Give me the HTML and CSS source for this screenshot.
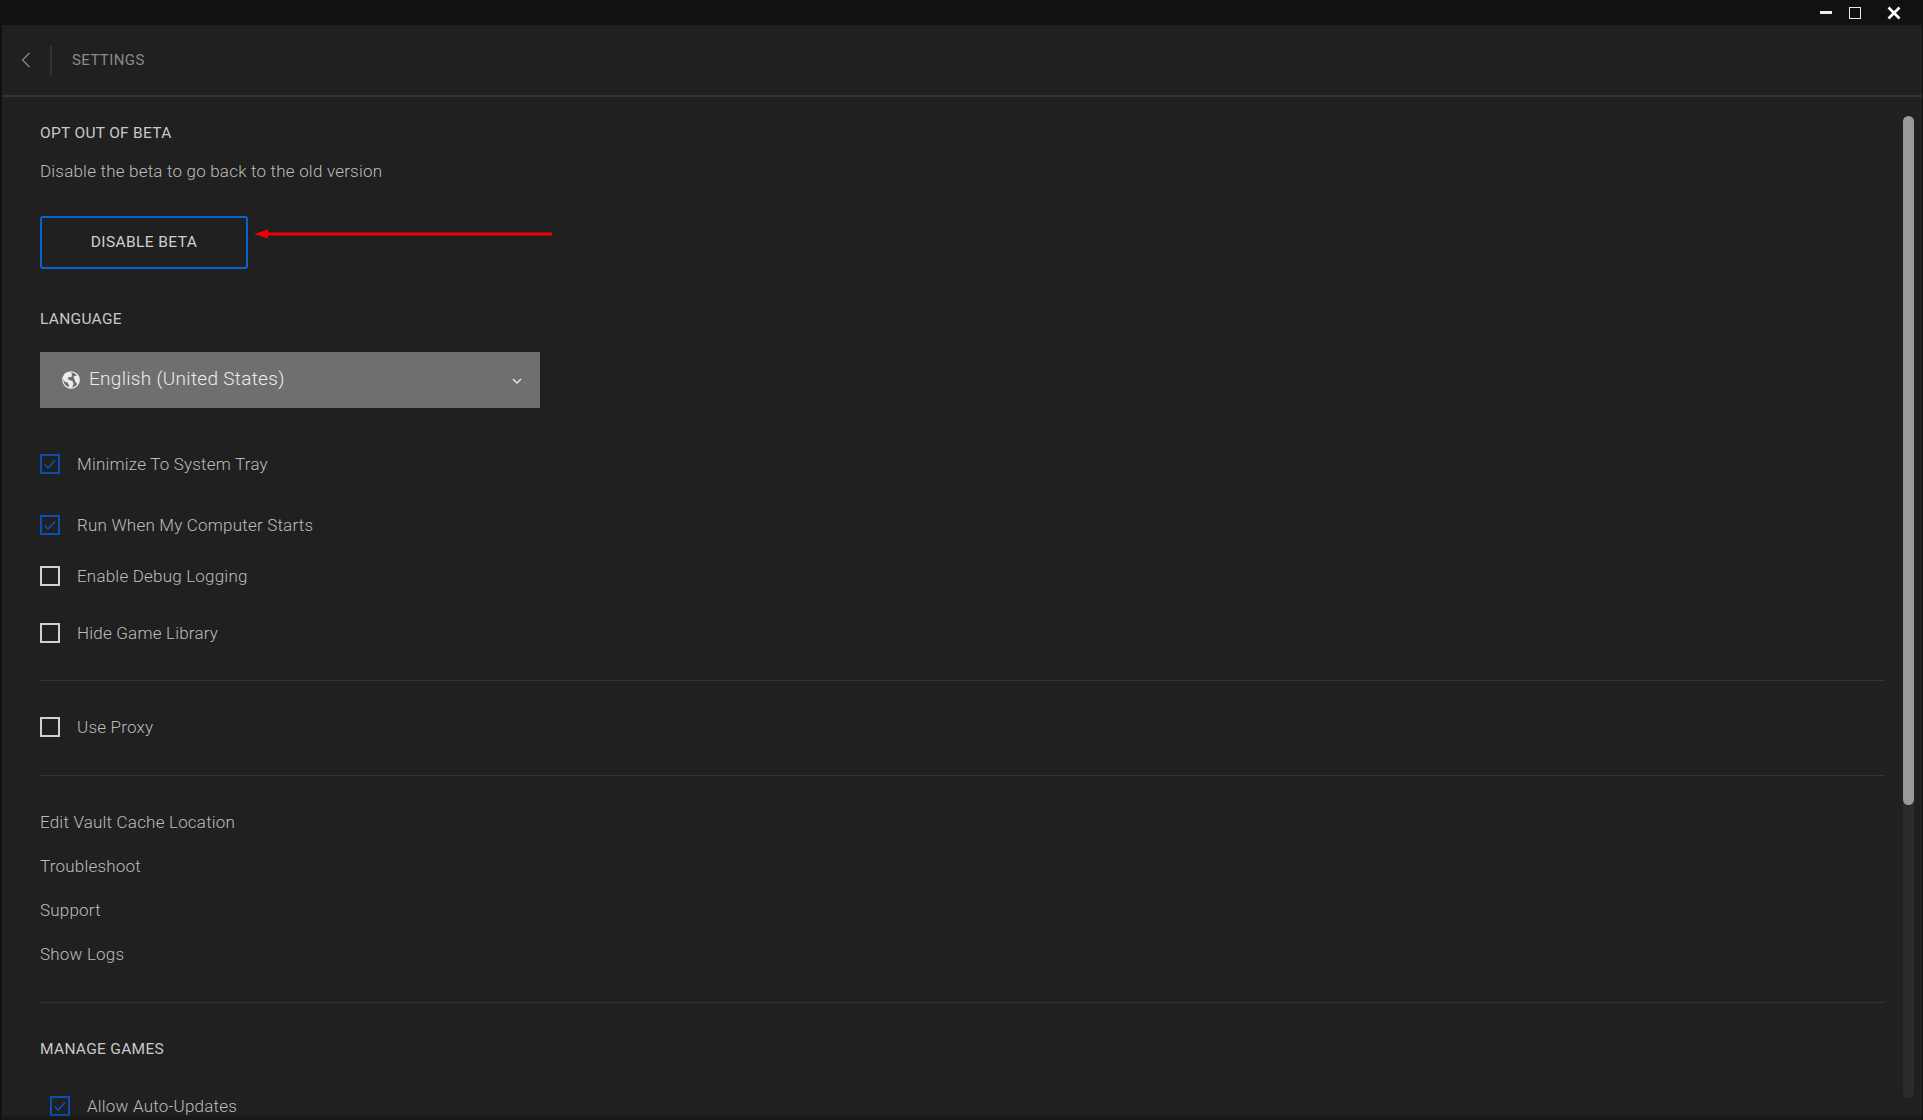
FILE: index.html
```html
<!DOCTYPE html>
<html>
<head>
    <title>Settings</title>
    <link rel="stylesheet" href="styles.css">
</head>
<body>
    <div class="titlebar">
        <span class="win-min"></span>
        <span class="win-max"></span>
        <svg class="win-close" width="14" height="14" viewBox="0 0 14 14"><path d="M1.5 1.5l11 11M12.5 1.5l-11 11" stroke="#fff" stroke-width="2.6" fill="none"/></svg>
    </div>

    <div class="app">
        <div class="header">
            <svg class="back" width="10" height="16" viewBox="0 0 10 16"><path d="M8.5 1L1.5 8l7 7" stroke="#8a8a8a" stroke-width="1.2" fill="none"/></svg>
            <span class="header-sep"></span>
            <span class="header-title">SETTINGS</span>
        </div>

        <div class="content">
            <h2 class="heading">OPT OUT OF BETA</h2>
            <p class="desc">Disable the beta to go back to the old version</p>

            <div class="beta-row">
                <button class="btn-outline">DISABLE BETA</button>
                <svg class="arrow" width="298" height="10" viewBox="0 0 298 10"><path d="M0 5l14-4.500v3h284v3H14v3z" fill="#f00000"/></svg>
            </div>

            <h2 class="heading heading-lang">LANGUAGE</h2>
            <div class="select">
                <svg class="globe" width="18" height="18" viewBox="0 0 18 18">
                    <circle cx="9" cy="9" r="8.200" fill="none" stroke="#ececec" stroke-width="1.200"/>
                    <path d="M8 .8L3 2 .8 7l1.700 3.500 3 1 1.500 2.500-.5 3 3.500-.3 1.500-4-1-2.500-3.500-1.500L5.500 7.500 7 6h2.500L10 3z" fill="#ececec"/>
                    <path d="M11.500 5.500l4.500-1.500L17.500 9l-.7 4.500-2.800-1.500-1.500-3.500z" fill="#ececec"/>
                </svg>
                <span class="select-value">English (United States)</span>
                <svg class="chevron" width="10" height="7" viewBox="0 0 10 7"><path d="M1 1l4 4 4-4" stroke="#eee" stroke-width="1.300" fill="none"/></svg>
            </div>

            <label class="check check-first"><span class="box on"><svg width="16" height="16" viewBox="0 0 16 16"><path d="M2.700 8.500l3.300 3.500 7-7.500" stroke="#0a5ac8" stroke-width="1.200" fill="none"/></svg></span>Minimize To System Tray</label>
            <label class="check check-run"><span class="box on"><svg width="16" height="16" viewBox="0 0 16 16"><path d="M2.700 8.500l3.300 3.500 7-7.500" stroke="#0a5ac8" stroke-width="1.200" fill="none"/></svg></span>Run When My Computer Starts</label>
            <label class="check check-debug"><span class="box"></span>Enable Debug Logging</label>
            <label class="check check-hide"><span class="box"></span>Hide Game Library</label>

            <hr class="rule rule-first">

            <label class="check"><span class="box"></span>Use Proxy</label>

            <hr class="rule rule-second">

            <div class="links">
                <a>Edit Vault Cache Location</a>
                <a>Troubleshoot</a>
                <a>Support</a>
                <a>Show Logs</a>
            </div>

            <hr class="rule rule-third">

            <h2 class="heading heading-games">MANAGE GAMES</h2>
            <label class="check check-auto"><span class="box on"><svg width="16" height="16" viewBox="0 0 16 16"><path d="M2.700 8.500l3.300 3.500 7-7.500" stroke="#0a5ac8" stroke-width="1.200" fill="none"/></svg></span>Allow Auto-Updates</label>
        </div>

        <div class="scrollbar"><div class="scroll-thumb"></div></div>
        <div class="bottom-fade"></div>
    </div>
</body>
</html>
```

FILE: styles.css
```css
html, body {
    margin: 0;
    height: 1120px;
    overflow: hidden;
    background: #111;
}
body {
    font-family: Roboto, "Liberation Sans", sans-serif;
    font-weight: 300;
    font-size: 17px;
    letter-spacing: 0.2px;
    color: #bcbcbc;
}
.titlebar {
    height: 25px;
    background: #111;
    display: flex;
    align-items: center;
    justify-content: flex-end;
}
.win-min {
    width: 12px;
    height: 3px;
    background: #eee;
    margin-right: 17px;
}
.win-max {
    width: 10px;
    height: 10px;
    border: 1px solid #e8e8e8;
    margin-right: 26px;
}
.win-close {
    margin-right: 22px;
}
.app {
    position: relative;
    height: 1095px;
    margin: 0 1px 0 2px;
    background: #202020;
    overflow: hidden;
}
.header {
    height: 70px;
    border-bottom: 2px solid #333;
    display: flex;
    align-items: center;
}
.back {
    margin-left: 19px;
}
.header-sep {
    width: 2px;
    height: 29px;
    background: #333;
    margin-left: 19px;
}
.header-title {
    margin-left: 20px;
    font-size: 15px;
    font-weight: 400;
    letter-spacing: 0.4px;
    color: #8a8a8a;
}
.content {
    padding: 26px 37px 0 38px;
}
.heading {
    margin: 0;
    font-size: 15.5px;
    line-height: 20px;
    font-weight: 400;
    letter-spacing: 0.3px;
    color: #c8c8c8;
}
.desc {
    margin: 18px 0 0;
    line-height: 20px;
}
.beta-row {
    position: relative;
    margin-top: 35px;
}
.btn-outline {
    display: block;
    width: 208px;
    height: 53px;
    background: transparent;
    border: 2px solid #0a62d0;
    border-radius: 3px;
    font-family: inherit;
    font-size: 15.5px;
    font-weight: 400;
    letter-spacing: 0.4px;
    color: #cfcfcf;
    padding: 0 0 2px;
}
.arrow {
    position: absolute;
    left: 214px;
    top: 13px;
}
.heading-lang {
    margin-top: 40px;
}
.select {
    width: 500px;
    height: 56px;
    margin-top: 23px;
    background: #6e6f6e;
    display: flex;
    align-items: center;
    box-sizing: border-box;
    padding-left: 22px;
}
.globe {
    flex: none;
}
.select-value {
    margin-left: 9px;
    padding-bottom: 3px;
    font-size: 19px;
    letter-spacing: 0.3px;
    color: #ececec;
}
.chevron {
    margin-left: auto;
    margin-right: 18px;
    margin-top: 2px;
}
.check {
    display: flex;
    align-items: center;
    height: 20px;
}
.box {
    width: 20px;
    height: 20px;
    box-sizing: border-box;
    border: 2px solid #d0d0d0;
    margin-right: 17px;
    flex: none;
}
.box.on {
    border-color: #0a50b0;
}
.box svg {
    display: block;
}
.check-first {
    margin-top: 46px;
}
.check-run {
    margin-top: 41px;
}
.check-debug {
    margin-top: 31px;
}
.check-hide {
    margin-top: 37px;
}
.rule {
    border: 0;
    height: 1px;
    background: #333;
    margin: 0;
}
.rule-first {
    margin: 37px 0 36px;
}
.rule-second {
    margin: 38px 0 36px;
}
.rule-third {
    margin: 38px 0 36px;
}
.links {
    display: flex;
    flex-direction: column;
    gap: 24px;
}
.links a {
    line-height: 20px;
}
.check-auto {
    margin: 37px 0 0 10px;
}
.scrollbar {
    position: absolute;
    left: 1901px;
    top: 91px;
    width: 11px;
    height: 982px;
    border-radius: 6px;
    background: #2c2c2c;
}
.scroll-thumb {
    height: 689px;
    border-radius: 6px;
    background: #999;
}
.bottom-fade {
    position: absolute;
    left: 0;
    right: 0;
    bottom: 0;
    height: 6px;
    background: linear-gradient(rgba(20,20,20,0), #161616);
}
```
